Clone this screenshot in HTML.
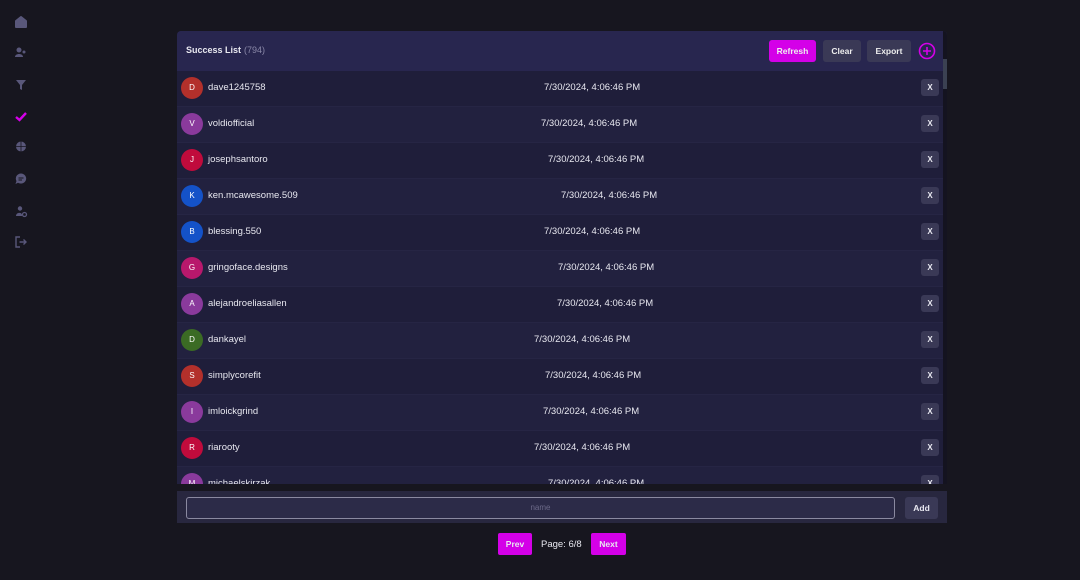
<!DOCTYPE html><html><head><style>
*{box-sizing:border-box;margin:0;padding:0}
body{width:1080px;height:580px;background:#17161f;font-family:"Liberation Sans",sans-serif;color:#e8e8f0;position:relative;overflow:hidden}
.side svg{position:absolute;left:14px}
.panel{position:absolute;left:177px;top:31px;width:770px;height:453px;background:#1f1e3a;border-radius:4px 4px 0 0;overflow:hidden}
.hdr{height:40px;background:#28264f;position:relative}
.hdr .t{position:absolute;left:9px;top:14px;font-size:9px;font-weight:bold}
.hdr .t span{font-weight:normal;color:#8a88a8;margin-left:3px}
.btn{position:absolute;top:9px;height:22px;border-radius:3px;font-size:8.5px;font-weight:bold;text-align:center;line-height:22px;background:#3a3956;color:#eee}
.row{position:absolute;left:0;width:766px;height:36px;border-bottom:1px solid #262544}
.row.a{background:#1f1e3a}.row.b{background:#22213f}
.av{position:absolute;left:4px;top:6px;width:22px;height:22px;border-radius:50%;font-size:8px;line-height:22px;text-align:center;color:#fff}
.nm{position:absolute;left:31px;top:11px;font-size:9.5px}
.dt{position:absolute;top:11px;font-size:9.5px}
.x{position:absolute;left:744px;top:8px;width:18px;height:17px;background:#3a3956;border-radius:3px;font-size:8px;font-weight:bold;text-align:center;line-height:17px}
.sb{position:absolute;left:766px;top:0;width:4px;height:453px;background:#141320}
.sb i{position:absolute;left:0;top:28px;width:4px;height:30px;background:#3b4152}
.inp{position:absolute;left:177px;top:491px;width:770px;height:32px;background:#28273f}
</style></head><body>
<div class="side">
<svg style="top:15px" width="14" height="14" viewBox="0 0 14 14"><path d="M2 6 L7 2 L12 6 V12 H2Z" fill="#59577a" stroke="#59577a" stroke-linejoin="round" stroke-width="2"/></svg>
<svg style="top:46px" width="14" height="14" viewBox="0 0 14 14"><circle cx="5" cy="4" r="2.5" fill="#59577a"/><path d="M1 11c0-4 8-4 8 0z" fill="#59577a"/><circle cx="10" cy="6" r="1.5" fill="#59577a"/></svg>
<svg style="top:78px" width="14" height="14" viewBox="0 0 14 14"><path d="M2 2H12L8 7V12L6 11V7Z" fill="#59577a"/></svg>
<svg style="top:110px" width="14" height="14" viewBox="0 0 14 14"><path d="M2 7L5.5 10L12 3" stroke="#d400e8" stroke-width="2.4" fill="none"/></svg>
<svg style="top:140px" width="14" height="14" viewBox="0 0 14 14"><circle cx="7" cy="6.5" r="5" fill="#59577a"/><path d="M2 6.5H12M7 1.5V11.5" stroke="#17161f" stroke-width="0.8"/></svg>
<svg style="top:172px" width="14" height="14" viewBox="0 0 14 14"><path d="M7 1.5a5.3 5 0 1 1-3 9.2L1.5 12l1-3A5.3 5 0 0 1 7 1.5z" fill="#59577a"/><path d="M4.5 6h5M4.5 8h3.5" stroke="#17161f"/></svg>
<svg style="top:205px" width="14" height="14" viewBox="0 0 14 14"><circle cx="6" cy="3.5" r="2.2" fill="#59577a"/><path d="M2 11c0-4 6-4 6-1v1z" fill="#59577a"/><circle cx="10.5" cy="9.5" r="2" stroke="#59577a" fill="none" stroke-width="1.3"/></svg>
<svg style="top:235px" width="14" height="14" viewBox="0 0 14 14"><path d="M6 2H2V12H6M5.5 7H12M9.5 4.5L12 7L9.5 9.5" stroke="#59577a" stroke-width="1.4" fill="none"/></svg>
</div>
<div class="panel">
<div class="hdr"><div class="t">Success List<span>(794)</span></div>
<div class="btn" style="left:592px;width:47px;background:#d400e8">Refresh</div>
<div class="btn" style="left:646px;width:38px">Clear</div>
<div class="btn" style="left:690px;width:44px">Export</div>
<svg style="position:absolute;left:741px;top:11px" width="18" height="18" viewBox="0 0 18 18"><circle cx="9" cy="9" r="7.5" stroke="#d400e8" stroke-width="1.6" fill="none"/><path d="M9 5V13M5 9H13" stroke="#d400e8" stroke-width="1.6"/></svg>
</div>
<div class="row a" style="top:40px"><div class="av" style="background:#b3302b">D</div><div class="nm">dave1245758</div><div class="dt" style="left:367px">7/30/2024, 4:06:46 PM</div><div class="x">X</div></div>
<div class="row b" style="top:76px"><div class="av" style="background:#8a3a9c">V</div><div class="nm">voldiofficial</div><div class="dt" style="left:364px">7/30/2024, 4:06:46 PM</div><div class="x">X</div></div>
<div class="row a" style="top:112px"><div class="av" style="background:#c00b3c">J</div><div class="nm">josephsantoro</div><div class="dt" style="left:371px">7/30/2024, 4:06:46 PM</div><div class="x">X</div></div>
<div class="row b" style="top:148px"><div class="av" style="background:#1452c8">K</div><div class="nm">ken.mcawesome.509</div><div class="dt" style="left:384px">7/30/2024, 4:06:46 PM</div><div class="x">X</div></div>
<div class="row a" style="top:184px"><div class="av" style="background:#1452c8">B</div><div class="nm">blessing.550</div><div class="dt" style="left:367px">7/30/2024, 4:06:46 PM</div><div class="x">X</div></div>
<div class="row b" style="top:220px"><div class="av" style="background:#b8186c">G</div><div class="nm">gringoface.designs</div><div class="dt" style="left:381px">7/30/2024, 4:06:46 PM</div><div class="x">X</div></div>
<div class="row a" style="top:256px"><div class="av" style="background:#8a3a9c">A</div><div class="nm">alejandroeliasallen</div><div class="dt" style="left:380px">7/30/2024, 4:06:46 PM</div><div class="x">X</div></div>
<div class="row b" style="top:292px"><div class="av" style="background:#3b6b24">D</div><div class="nm">dankayel</div><div class="dt" style="left:357px">7/30/2024, 4:06:46 PM</div><div class="x">X</div></div>
<div class="row a" style="top:328px"><div class="av" style="background:#b3302b">S</div><div class="nm">simplycorefit</div><div class="dt" style="left:368px">7/30/2024, 4:06:46 PM</div><div class="x">X</div></div>
<div class="row b" style="top:364px"><div class="av" style="background:#8a3a9c">I</div><div class="nm">imloickgrind</div><div class="dt" style="left:366px">7/30/2024, 4:06:46 PM</div><div class="x">X</div></div>
<div class="row a" style="top:400px"><div class="av" style="background:#c00b3c">R</div><div class="nm">riarooty</div><div class="dt" style="left:357px">7/30/2024, 4:06:46 PM</div><div class="x">X</div></div>
<div class="row b" style="top:436px"><div class="av" style="background:#8a3a9c">M</div><div class="nm">michaelskirzak</div><div class="dt" style="left:371px">7/30/2024, 4:06:46 PM</div><div class="x">X</div></div>
<div class="sb"><i></i></div>
</div>
<div class="inp">
<div style="position:absolute;left:9px;top:6px;width:709px;height:22px;border:1px solid #8a89a0;border-radius:3px;background:#2c2b48;font-size:8px;color:#6c6a88;text-align:center;line-height:20px">name</div>
<div style="position:absolute;left:728px;top:6px;width:33px;height:22px;background:#3a3956;border-radius:3px;font-size:8.5px;font-weight:bold;text-align:center;line-height:22px">Add</div>
</div>
<div style="position:absolute;left:498px;top:533px;width:34px;height:22px;background:#d400e8;border-radius:2px;font-size:8.5px;font-weight:bold;text-align:center;line-height:22px">Prev</div>
<div style="position:absolute;left:541px;top:539px;font-size:9.5px">Page: 6/8</div>
<div style="position:absolute;left:591px;top:533px;width:35px;height:22px;background:#d400e8;border-radius:2px;font-size:8.5px;font-weight:bold;text-align:center;line-height:22px">Next</div>
</body></html>
